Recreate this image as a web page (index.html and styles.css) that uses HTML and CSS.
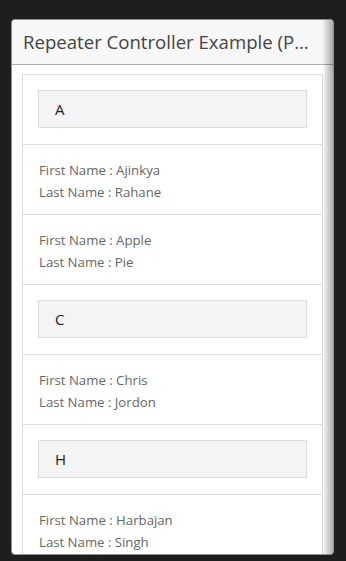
FILE: index.html
```html
<!DOCTYPE html>
<html>
<head>
<meta charset="utf-8">
<link rel="stylesheet" href="styles.css">
</head>
<body>
<div class="page">
  <div class="panel">
    <div class="panel-header">
      <span class="title">Repeater Controller Example (Phone)</span>
    </div>
    <div class="panel-body">
      <div class="list">
        <div class="row group"><div class="group-box">A</div></div>
        <div class="row item"><div class="line">First Name : Ajinkya</div><div class="line">Last Name : Rahane</div></div>
        <div class="row item"><div class="line">First Name : Apple</div><div class="line">Last Name : Pie</div></div>
        <div class="row group"><div class="group-box">C</div></div>
        <div class="row item"><div class="line">First Name : Chris</div><div class="line">Last Name : Jordon</div></div>
        <div class="row group"><div class="group-box">H</div></div>
        <div class="row item"><div class="line">First Name : Harbajan</div><div class="line">Last Name : Singh</div></div>
        <div class="row item"><div class="line">First Name : Hardik</div><div class="line">Last Name : Pandya</div></div>
      </div>
    </div>
  </div>
</div>
</body>
</html>
```
FILE: styles.css
```css
* { box-sizing: border-box; }
html, body { margin: 0; padding: 0; }
body {
  background: #1e1e1e;
  font-family: "Open Sans", "Noto Sans", sans-serif;
  width: 346px;
  height: 561px;
  overflow: hidden;
}
.page {
  padding: 19px 12px 0 11px;
  height: 561px;
}
.panel {
  position: relative;
  height: 536px;
  border: 1px solid #8f8f8f;
  border-radius: 4px;
  background: #fff;
  overflow: hidden;
  display: flex;
  flex-direction: column;
}
.panel::after {
  content: "";
  position: absolute;
  top: 0;
  right: 0;
  bottom: 0;
  width: 11px;
  background: linear-gradient(to right, rgba(0,0,0,0), rgba(0,0,0,0.32));
  pointer-events: none;
}
.panel-header {
  height: 45px;
  flex: none;
  background: #f7f7f7;
  border-bottom: 1px solid #a9a9a9;
  padding: 0 20px 0 11px;
  display: flex;
  align-items: center;
}
.title {
  font-size: 18.6px;
  color: #444;
  white-space: nowrap;
  overflow: hidden;
  text-overflow: ellipsis;
  padding-bottom: 1px;
}
.panel-body {
  flex: 1;
  padding: 9px 10px 0 10px;
  overflow: hidden;
}
.list {
  border: 1px solid #ddd;
  border-bottom: none;
}
.row {
  height: 70px;
  border-bottom: 1px solid #ddd;
}
.group {
  padding: 15px;
}
.group-box {
  height: 38px;
  background: #f4f4f4;
  border: 1px solid #dcdcdc;
  padding-left: 16px;
  display: flex;
  align-items: center;
  font-size: 15px;
  color: #222;
}
.item {
  padding: 14px 16px 0 16px;
}
.line {
  font-size: 13.2px;
  line-height: 22px;
  color: #666;
}
```
